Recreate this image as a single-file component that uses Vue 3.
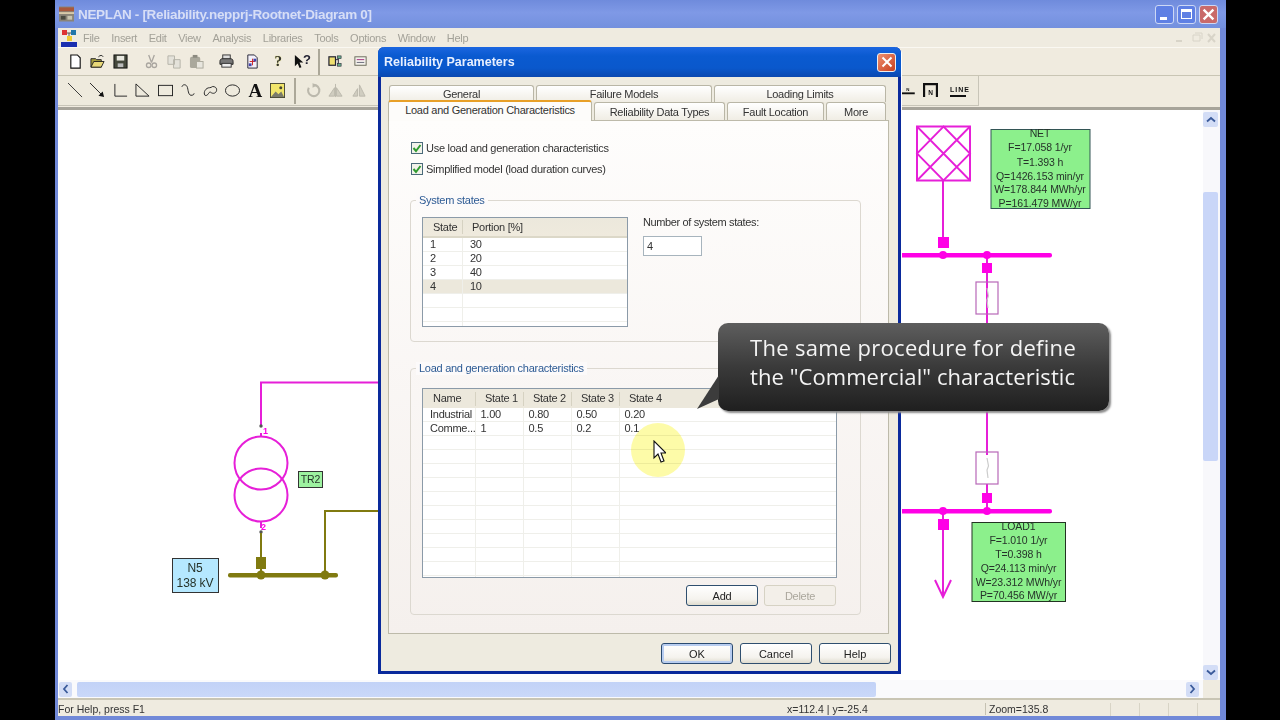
<script setup>
const menus = ['File', 'Insert', 'Edit', 'View', 'Analysis', 'Libraries', 'Tools', 'Options', 'Window', 'Help']
const stateRows = [['1', '30'], ['2', '20'], ['3', '40'], ['4', '10'], ['', ''], ['', ''], ['', '']]
const charRows = [
  ['Industrial', '1.00', '0.80', '0.50', '0.20'],
  ['Comme...', '1', '0.5', '0.2', '0.1'],
  ...Array.from({ length: 11 }, () => ['', '', '', '', ''])
]
const charHead = ['Name', 'State 1', 'State 2', 'State 3', 'State 4']
const netLines = [['NET', 137], ['F=17.058 1/yr', 151], ['T=1.393 h', 166], ['Q=1426.153 min/yr', 180], ['W=178.844 MWh/yr', 193], ['P=161.479 MW/yr', 207]]
const loadLines = [['LOAD1', 530], ['F=1.010 1/yr', 544], ['T=0.398 h', 558], ['Q=24.113 min/yr', 572], ['W=23.312 MWh/yr', 586], ['P=70.456 MW/yr', 599]]
</script>

<template>
  <div class="stage">
    <div class="win">
      <header class="title">
        <svg class="appicon" viewBox="0 0 16 16"><rect width="16" height="16" fill="#8a8478"/><rect y="1" width="16" height="4" fill="#a9583c"/><rect y="6" width="16" height="2" fill="#d8c9a8"/><rect x="2" y="10" width="5" height="4" fill="#4a4a40"/><rect x="9" y="10" width="5" height="4" fill="#c9c4b0"/></svg>
        <span class="title-text">NEPLAN - [Reliability.nepprj-Rootnet-Diagram 0]</span>
        <div class="caps">
          <span class="cap"><i class="min"></i></span>
          <span class="cap"><i class="max"></i></span>
          <span class="cap close"><svg viewBox="0 0 12 12"><path d="M1.500 1.500l9 9M10.500 1.500l-9 9" stroke="#fff" stroke-width="2.200" fill="none"/></svg></span>
        </div>
      </header>

      <nav class="menu">
        <svg class="logo" viewBox="0 0 16 18">
          <path d="M4 4h8M8 4v6" stroke="#555" fill="none"/>
          <rect x="1" y="1" width="5" height="5" fill="#d33"/><rect x="10" y="1" width="5" height="5" fill="#27a"/><rect x="6" y="7" width="5" height="5" fill="#ec3"/>
          <rect y="13" width="16" height="5" fill="#1a2fb0"/>
        </svg>
        <span v-for="m in menus" :key="m" class="menu-item">{{ m }}</span>
        <div class="mdi">
          <svg viewBox="0 0 44 12" width="44" height="12"><path d="M4 9h6" stroke="#d8d4c8" stroke-width="2"/><path d="M21 3h7v6h-7zM23 1h7v6" stroke="#d8d4c8" fill="none"/><path d="M36 2l7 8M43 2l-7 8" stroke="#d8d4c8" stroke-width="2"/></svg>
        </div>
      </nav>

      <div class="tb1">
        <span class="t"><svg viewBox="0 0 16 16"><path d="M3 1h7l3 3v11H3z" fill="#fff" stroke="#111" stroke-width="1.200"/></svg></span>
        <span class="t"><svg viewBox="0 0 16 16"><path d="M1 14V5h5l1 1h5v8z" fill="#a8a040" stroke="#222"/><path d="M1 14l3-6h11l-3 6z" fill="#e8d878" stroke="#222"/><path d="M9 3c2-2 4-2 5 0" stroke="#222" fill="none"/></svg></span>
        <span class="t"><svg viewBox="0 0 16 16"><rect x="1" y="1" width="14" height="14" fill="#45483c" stroke="#111"/><rect x="4" y="2" width="8" height="5" fill="#e8e8e0"/><rect x="5" y="10" width="6" height="4" fill="#bbb"/></svg></span>
        <span class="t m9"><svg viewBox="0 0 16 16"><path d="M5 1l3 8M11 1L8 9" stroke="#aaa6a0" stroke-width="1.400" fill="none"/><circle cx="5" cy="12" r="2.400" fill="none" stroke="#aaa6a0" stroke-width="1.400"/><circle cx="11" cy="12" r="2.400" fill="none" stroke="#aaa6a0" stroke-width="1.400"/></svg></span>
        <span class="t"><svg viewBox="0 0 16 16"><path d="M1 2h7v9H1zM7 6h7v9H7z" fill="#e4e2da" stroke="#b4b2a8"/></svg></span>
        <span class="t"><svg viewBox="0 0 16 16"><rect x="1" y="3" width="11" height="12" rx="2" fill="#aaa89c"/><rect x="4" y="1" width="5" height="3" fill="#8c8a80"/><rect x="8" y="8" width="7" height="7" fill="#e8e6de" stroke="#aaa89c"/></svg></span>
        <span class="t m8"><svg viewBox="0 0 16 16"><rect x="4" y="1" width="8" height="5" fill="#ddd" stroke="#333"/><path d="M1 8c0-2 1-3 3-3h8c2 0 3 1 3 3v3H1z" fill="#777" stroke="#222"/><rect x="3" y="10" width="10" height="4" fill="#eee" stroke="#333"/></svg></span>
        <span class="t m5"><svg viewBox="0 0 16 16"><path d="M3 1h7l3 3v11H3z" fill="#f2f0fa" stroke="#223"/><path d="M5 8h6M8 5v7" stroke="#c22"/><rect x="4" y="10" width="3" height="3" fill="#44a"/><rect x="9" y="5" width="3" height="3" fill="#44a"/></svg></span>
        <span class="t m4"><span class="qm">?</span></span>
        <span class="t"><svg viewBox="0 0 16 16"><path d="M2 1v12l3-3 2 5 2-1-2-5h4z" fill="#111"/></svg><span class="qm2">?</span></span>
        <span class="sep"></span>
        <span class="t"><svg viewBox="0 0 16 16"><rect x="1" y="3" width="7" height="9" fill="#f0e070" stroke="#223" stroke-width="1.300"/><path d="M8 6h3M11 3v9" stroke="#223"/><rect x="10" y="2" width="4" height="3" fill="#6a8" stroke="#223" stroke-width=".6"/><rect x="10" y="10" width="4" height="3" fill="#6a8" stroke="#223" stroke-width=".6"/></svg></span>
        <span class="t m3"><svg viewBox="0 0 16 16"><rect x="2" y="3" width="12" height="9" fill="#f4f2ec" stroke="#665"/><path d="M4 6h8" stroke="#a2287a"/><path d="M4 9h8" stroke="#667"/></svg></span>
      </div>

      <div class="tb2">
        <div class="bar">
          <div class="bar-group">
            <span class="t"><svg viewBox="0 0 16 16"><path d="M0 0l15 15" stroke="#333" fill="none"/></svg></span>
            <span class="t"><svg viewBox="0 0 16 16"><path d="M0 0l14 14" stroke="#222" fill="none"/><path d="M15 15l-6-1.500 4.500-4.500z" fill="#111"/></svg></span>
            <span class="t"><svg viewBox="0 0 16 16"><path d="M2 1v13h13" stroke="#222" fill="none"/></svg></span>
            <span class="t"><svg viewBox="0 0 16 16"><path d="M1 1v13h14z" stroke="#222" fill="none"/></svg></span>
            <span class="t"><svg viewBox="0 0 16 16"><rect x=".5" y="2.500" width="15" height="11" stroke="#222" fill="none"/></svg></span>
            <span class="t"><svg viewBox="0 0 16 16"><path d="M2 4c1-3 5-3 6 1s1 9 5 8c1.500-.3 2-1 2-2" stroke="#222" fill="none"/></svg></span>
            <span class="t"><svg viewBox="0 0 16 16"><path d="M2 13c-2-3 1-8 5-8 3 0 2-2 5-1 4 1 3 7-1 7-3 0-3-3-5 0-1 2-3 3-4 2z" stroke="#222" fill="none"/></svg></span>
            <span class="t"><svg viewBox="0 0 16 16"><ellipse cx="8" cy="8" rx="7.500" ry="6" stroke="#222" fill="none"/></svg></span>
            <span class="t big-a">A</span>
            <span class="t"><svg viewBox="0 0 16 16"><rect x=".5" y=".5" width="15" height="15" fill="#f1e56a" stroke="#443"/><path d="M1 15l5-6 3 3 3-3 3 6z" fill="#7a7a6a"/><circle cx="11.500" cy="5" r="1.600" fill="#443"/></svg></span>
            <span class="sep sep2"></span>
            <span class="t"><svg viewBox="0 0 16 16"><path d="M8 2a6 6 0 1 1-5 3" stroke="#bbb8ac" stroke-width="2.200" fill="none"/><path d="M7 0v5l4-2z" fill="#bbb8ac"/></svg></span>
            <span class="t"><svg viewBox="0 0 16 16"><path d="M8 1v14" stroke="#bbb8ac"/><path d="M7 5v9H1zM9 5l6 9H9z" fill="#d0cdc0" stroke="#bbb8ac"/></svg></span>
            <span class="t"><svg viewBox="0 0 16 16"><path d="M2 14l5-8v8zM9 2l6 12H9z" fill="#d0cdc0" stroke="#bbb8ac"/></svg></span>
          </div>
          <div class="bar-group">
            <span class="t"><svg viewBox="0 0 24 16"><rect x="0" y="11" width="22" height="3" fill="#111"/><text x="11" y="9" class="tiny">N</text></svg></span>
            <span class="t"><svg viewBox="0 0 16 16"><path d="M1 15V1h14v14" stroke="#111" stroke-width="2.600" fill="none"/><text x="8" y="13" class="tiny">N</text></svg></span>
            <span class="t line-ic">LINE</span>
          </div>
        </div>
      </div>

      <div class="work">
        <div class="canvas">
          <svg class="diagram" viewBox="58 110 1145 570">
            <g fill="none" stroke="#e61fd8" stroke-width="2">
              <path d="M378 382.500H261V425"/>
              <circle cx="261" cy="463" r="26.500"/>
              <circle cx="261" cy="495" r="26.500"/>
              <path d="M261 433v3M261 522v6"/>
              <rect x="917" y="126.500" width="53" height="54"/>
              <path d="M943.500 126.500l26.500 27-26.500 27-26.500-27zM917 126.500l53 54M970 126.500l-53 54" stroke-width="1.800"/>
              <path d="M943 181v62M987 255v200M987 484v27M943 511v85"/>
              <path d="M935 580l8 17 8-17"/>
            </g>
            <g fill="none" stroke="#b868b8" stroke-width="1.200">
              <rect x="976" y="282" width="22" height="32"/>
              <rect x="976" y="452" width="22" height="32"/>
              <path d="M987 288l1.500 8-1.500 4 1 8M987 458l1.500 8-1.500 4 1 8" stroke="#ccc"/>
            </g>
            <g fill="#ff00e6" stroke="none">
              <rect x="899" y="253" width="153" height="4.500" rx="2"/>
              <rect x="899" y="509" width="153" height="4.500" rx="2"/>
              <circle cx="943" cy="255" r="4"/><circle cx="987" cy="255" r="4"/>
              <circle cx="943" cy="511" r="4"/><circle cx="987" cy="511" r="4"/>
              <rect x="938" y="237" width="11" height="11"/><rect x="982" y="263" width="10" height="10"/>
              <rect x="982" y="493" width="10" height="10"/><rect x="938" y="519" width="11" height="11"/>
              <text x="263" y="434" class="num">1</text><text x="261" y="530" class="num">2</text>
            </g>
            <circle cx="261" cy="426" r="1.700" fill="#555"/><circle cx="261" cy="532" r="1.700" fill="#555"/>
            <g fill="none" stroke="#807a10" stroke-width="2">
              <path d="M261 533v42M325 575v-64H378"/>
            </g>
            <g fill="#807a10">
              <rect x="228" y="573" width="110" height="4.500" rx="2"/>
              <rect x="256" y="557" width="10" height="12"/>
              <circle cx="261" cy="575" r="4.500"/><circle cx="325" cy="575" r="4.500"/>
            </g>
            <rect x="298.500" y="471.500" width="24" height="16" fill="#9df2a0" stroke="#333"/>
            <text x="310.500" y="483" class="lbl">TR2</text>
            <rect x="172.500" y="558.500" width="46" height="34" fill="#b5e8ff" stroke="#333"/>
            <text x="195" y="572" class="lbl big">N5</text>
            <text x="195" y="587" class="lbl big">138 kV</text>
            <rect x="991" y="129.500" width="99" height="79" fill="#8cf08c" stroke="#355"/>
            <text v-for="l in netLines" :key="l[0]" x="1040" :y="l[1]" class="lbl">{{ l[0] }}</text>
            <rect x="972" y="522.500" width="93.500" height="79" fill="#8cf08c" stroke="#232"/>
            <text v-for="l in loadLines" :key="l[0]" x="1018.500" :y="l[1]" class="lbl">{{ l[0] }}</text>
          </svg>
        </div>
        <div class="vscroll">
          <span class="sbtn"><svg viewBox="0 0 10 6"><path d="M1 5l4-3.500L9 5" stroke="#3a5a9a" stroke-width="1.800" fill="none"/></svg></span>
          <span class="vtrack"><span class="vthumb"></span></span>
          <span class="sbtn"><svg viewBox="0 0 10 6"><path d="M1 1l4 3.500L9 1" stroke="#3a5a9a" stroke-width="1.800" fill="none"/></svg></span>
        </div>
      </div>

      <div class="hscroll">
        <span class="sbtn h"><svg viewBox="0 0 6 10"><path d="M5 1L1.500 5 5 9" stroke="#3a5a9a" stroke-width="1.800" fill="none"/></svg></span>
        <span class="htrack"><span class="hthumb"></span></span>
        <span class="sbtn h"><svg viewBox="0 0 6 10"><path d="M1 1l3.500 4L1 9" stroke="#3a5a9a" stroke-width="1.800" fill="none"/></svg></span>
        <span class="corner"></span>
      </div>

      <footer class="status">
        <span class="st-main">For Help, press F1</span>
        <span class="st-pos">x=112.4 | y=-25.4</span>
        <span class="st-zoom">Zoom=135.8</span>
        <span class="st-e"></span><span class="st-e"></span><span class="st-e"></span><span class="st-e last"></span>
      </footer>
    </div>

    <section class="dlg">
      <header class="dlg-title">
        <span>Reliability Parameters</span>
        <span class="dlg-close"><svg viewBox="0 0 12 12"><path d="M1.500 1.500l9 9M10.500 1.500l-9 9" stroke="#fff" stroke-width="2" fill="none"/></svg></span>
      </header>
      <div class="dlg-body">
        <div class="tabrow one">
          <span class="tab w145">General</span>
          <span class="tab w176">Failure Models</span>
          <span class="tab w172">Loading Limits</span>
        </div>
        <div class="tabrow two">
          <span class="tab active">Load and Generation Characteristics</span>
          <span class="tab w130">Reliability Data Types</span>
          <span class="tab w97">Fault Location</span>
          <span class="tab w60">More</span>
        </div>
        <div class="panel">
          <label class="chk"><span class="box"><svg viewBox="0 0 10 10"><path d="M1.500 5l2.500 3 4.500-6" stroke="#2f9a2f" stroke-width="2" fill="none"/></svg></span>Use load and generation characteristics</label>
          <label class="chk"><span class="box"><svg viewBox="0 0 10 10"><path d="M1.500 5l2.500 3 4.500-6" stroke="#2f9a2f" stroke-width="2" fill="none"/></svg></span>Simplified model (load duration curves)</label>

          <div class="group g1">
            <span class="legend">System states</span>
            <div class="g1-inner">
              <div class="list">
                <div class="lhead"><span class="c1 hc">State</span><span class="c2 hc">Portion [%]</span></div>
                <div v-for="(r, i) in stateRows" :key="i" class="lrow" :class="{ sel: i === 3 }"><span class="c1">{{ r[0] }}</span><span class="c2">{{ r[1] }}</span></div>
              </div>
              <div class="num-col">
                <span>Number of system states:</span>
                <span class="input">4</span>
              </div>
            </div>
          </div>

          <div class="group g2">
            <span class="legend">Load and generation characteristics</span>
            <div class="grid">
              <div class="ghead"><span v-for="h in charHead" :key="h" class="gc hc">{{ h }}</span></div>
              <div v-for="(r, i) in charRows" :key="i" class="grow"><span v-for="(c, j) in r" :key="j" class="gc">{{ c }}</span></div>
            </div>
            <div class="gbtns">
              <span class="btn">Add</span>
              <span class="btn off">Delete</span>
            </div>
          </div>
        </div>
        <div class="dlg-foot">
          <span class="btn def">OK</span>
          <span class="btn">Cancel</span>
          <span class="btn">Help</span>
        </div>
      </div>
    </section>

    <div class="halo"></div>
    <svg class="cursor" viewBox="0 0 13 23"><path d="M1 1v17l4-4 3 8 3-1-3-8h5z" fill="#fff" stroke="#111" stroke-width="1.100"/></svg>

    <aside class="callout">
      <svg class="tail" viewBox="0 0 24 36"><path d="M23 1L1 35l22-10z" fill="#3c3c3c"/></svg>
      <p>The same procedure for define</p>
      <p class="narrow">the "Commercial" characteristic</p>
    </aside>
  </div>
</template>

<style>
html, body { margin: 0; background: #000; }
</style>

<style scoped>
.stage { position: relative; width: 1280px; height: 720px; background: #000; overflow: hidden; font-family: "Liberation Sans", Arial, sans-serif; filter: blur(0.35px); }
.win { position: absolute; left: 55px; top: 0; width: 1171px; height: 720px; display: flex; flex-direction: column; background: #7189d8; box-sizing: border-box; padding: 0 6px 4px 3px; }
.title { height: 28px; flex: none; display: flex; align-items: center; gap: 4px; background: linear-gradient(#6f8bdc, #7f99e6 45%, #7390de); margin: 0 -6px 0 -3px; padding: 0 8px 0 4px; }
.appicon { width: 15px; height: 16px; }
.title-text { color: #d7def6; font-size: 13.500px; font-weight: bold; letter-spacing: -.34px; }
.caps { margin-left: auto; display: flex; gap: 3px; }
.cap { width: 19px; height: 19px; border-radius: 3px; background: #5f80e4; border: 1px solid #cdd8f5; box-sizing: border-box; display: flex; align-items: center; justify-content: center; position: relative; }
.cap .min { width: 7px; height: 3px; background: #fff; margin-top: 9px; margin-right: 2px; }
.cap .max { width: 11px; height: 10px; border: 1.500px solid #fff; border-top-width: 3px; box-sizing: border-box; }
.cap.close { background: #c96a6a; }
.cap.close svg { width: 13px; height: 13px; }
.menu { height: 19px; flex: none; display: flex; align-items: center; gap: 11.600px; background: #efebe0; font-size: 11px; letter-spacing: -.27px; color: #a3a198; padding-left: 3px; }
.logo { width: 16px; height: 18px; margin-right: -5.600px; }
.mdi { margin-left: auto; margin-right: 4px; display: flex; }
.tb1 { height: 29px; flex: none; display: flex; align-items: center; background: #f0ebdf; border-top: 1px solid #faf8f2; border-bottom: 1px solid #c9c5b4; box-sizing: border-box; padding-left: 6px; }
.t { width: 22.500px; flex: none; height: 18px; display: flex; align-items: center; justify-content: center; position: relative; }
.t svg { width: 15px; height: 15px; }
.m9 { margin-left: 9px; }
.m8 { margin-left: 7px; }
.m5 { margin-left: 4px; }
.m4 { margin-left: 3px; }
.m3 { margin-left: 3px; }
.qm { font: bold 15px "Liberation Serif", serif; color: #333; text-shadow: 0 0 1px #dd4; }
.qm2 { position: absolute; right: 1px; top: -1px; font: bold 13px "Liberation Sans", sans-serif; color: #223; }
.sep { width: 2px; height: 26px; background: #aca899; margin: 0 4px 0 6px; }
.sep2 { margin-left: 5px; margin-right: 6px; }
.tb2 { height: 31px; flex: none; display: flex; background: #f0ebdf; border-bottom: 3px solid #a7a49a; box-sizing: content-box; }
.bar { width: 921px; height: 30px; display: flex; justify-content: space-between; align-items: center; padding: 0 4px 0 6px; box-sizing: border-box; background: #eeeadd; border-right: 1px solid #c8c5b8; border-bottom: 1px solid #c8c5b8; }
.bar-group { display: flex; align-items: center; }
.big-a { font: bold 19px "Liberation Serif", serif; color: #111; }
.tiny { font: bold 7px "Liberation Sans", sans-serif; text-anchor: middle; fill: #111; }
.line-ic { font: bold 7px "Liberation Sans", sans-serif; color: #111; letter-spacing: 1px; border-bottom: 2px solid #111; height: 10px; display: block; text-align: center; width: 16px; line-height: 9px; margin: 0 8px; }
.work { flex: 1; min-height: 0; display: flex; background: #fff; }
.canvas { flex: 1; min-width: 0; position: relative; overflow: hidden; background: #fff; }
.diagram { position: absolute; inset: 0; width: 100%; height: 100%; }
.lbl { font: 10.500px "Liberation Sans", sans-serif; fill: #26332a; text-anchor: middle; letter-spacing: -.1px; }
.lbl.big { font-size: 12px; }
.num { font: bold 9px "Liberation Sans", sans-serif; }
.vscroll { width: 17px; flex: none; display: flex; flex-direction: column; background: #f8f8fb; }
.sbtn { width: 15px; height: 15px; flex: none; background: #d3ddf6; border-radius: 2px; display: flex; align-items: center; justify-content: center; }
.sbtn svg { width: 10px; height: 7px; }
.vscroll .sbtn { margin-top: 2px; }
.vscroll .sbtn:last-child { margin: 0; }
.vtrack { flex: 1; display: flex; flex-direction: column; padding-top: 65px; padding-bottom: 204px; }
.vthumb { flex: 1; background: #c9d6f8; width: 15px; border-radius: 2px; }
.hscroll { height: 20px; flex: none; display: flex; align-items: center; background: #fafafc; padding-left: 1px; border-bottom: 2px solid #c9c5b4; box-sizing: border-box; }
.sbtn.h { width: 13px; height: 15px; }
.sbtn.h svg { width: 7px; height: 10px; }
.htrack { flex: 1; display: flex; padding-left: 5px; }
.hthumb { width: 799px; height: 15px; background: linear-gradient(#c2d2f7, #cad8f9); border-radius: 2px; }
.corner { width: 17px; height: 18px; background: #efebe0; margin-left: 4px; }
.status { height: 16px; flex: none; display: flex; align-items: center; background: #efebe0; font-size: 10.500px; color: #333; padding-top: 2px; box-sizing: border-box; }
.st-main { width: 729px; }
.st-pos { width: 198px; }
.st-zoom { width: 125px; border-left: 1px solid #c5c1b2; padding-left: 3px; box-sizing: border-box; }
.st-e { width: 28px; height: 13px; border-left: 1px solid #d8d4c6; }
.st-e.last { width: 18px; }

.dlg { position: absolute; left: 378px; top: 47px; width: 523px; height: 627px; background: #ece9d8; border: 3px solid #0a2a9c; border-top: 0; border-radius: 6px 6px 0 0; box-sizing: border-box; display: flex; flex-direction: column; box-shadow: 1px 1px 0 #fff; }
.dlg-title { height: 30px; margin: 0 -3px; flex: none; display: flex; align-items: center; justify-content: space-between; padding: 0 5px 0 6px; background: linear-gradient(#1b66e0, #0a5ad0 30%, #0a58cc 70%, #0a48b0); border-radius: 6px 6px 0 0; color: #e8f0ff; font-size: 12.500px; font-weight: bold; box-sizing: border-box; }
.dlg-close { width: 19px; height: 19px; border-radius: 3px; background: linear-gradient(135deg, #ee9070, #c8401f); border: 1px solid #eee; box-sizing: border-box; display: flex; align-items: center; justify-content: center; }
.dlg-close svg { width: 12px; height: 12px; }
.dlg-body { flex: 1; display: flex; flex-direction: column; padding: 8px 9px 0 7px; background: #eeebe0; min-height: 0; }
.tabrow { display: flex; height: 17px; font-size: 11px; letter-spacing: -.27px; color: #333; }
.tabrow.one { padding-left: 1px; gap: 2px; }
.tabrow.two { height: 18px; align-items: flex-end; gap: 2px; padding-right: 2px; }
.tab { box-sizing: border-box; height: 100%; display: flex; align-items: center; justify-content: center; background: linear-gradient(#fff, #f0ede4); border: 1px solid #b9b6a6; border-bottom: 0; border-radius: 3px 3px 0 0; }
.w145 { width: 145px; }
.w176 { width: 176px; }
.w172 { width: 172px; }
.w130 { width: 131px; }
.w97 { width: 97px; }
.w60 { width: 60px; }
.tab.active { width: 204px; height: 21px; margin-bottom: -1px; margin-top: -3px; background: #fdfcfa; border-top: 2px solid #e8a028; padding-bottom: 4px; position: relative; z-index: 1; }
.panel { flex: none; height: 514px; width: 501px; box-sizing: border-box; background: linear-gradient(#fefdfc, #f5f0ed); border: 1px solid #bdbaaa; padding: 20px 0 0 22px; display: flex; flex-direction: column; font-size: 11px; letter-spacing: -.27px; color: #333; }
.chk { display: flex; align-items: center; gap: 3px; height: 13px; margin-bottom: 8px; }
.box { width: 12px; height: 12px; box-sizing: border-box; border: 1px solid #4a6a7a; background: #f2f2ea; display: flex; }
.box svg { width: 10px; height: 10px; }
.group { position: relative; width: 451px; margin-left: -1px; box-sizing: border-box; border: 1px solid #dcd8d0; border-radius: 4px; padding-left: 11px; }
.g1 { height: 142px; margin-top: 17px; padding-top: 16px; }
.g2 { height: 247px; margin-top: 26px; padding-top: 19px; }
.legend { position: absolute; left: 5px; top: -7px; padding: 0 3px; background: #fcfafa; color: #2d5b94; line-height: 13px; }
.g1-inner { display: flex; gap: 15px; }
.list { width: 206px; height: 110px; box-sizing: border-box; border: 1px solid #8b9aa8; overflow: hidden; background: #fff; }
.lhead { height: 20px; display: flex; align-items: center; background: linear-gradient(#ece8dc, #efeadd); border-bottom: 2px solid #dcd8c8; box-sizing: border-box; }
.lrow { height: 14px; display: flex; align-items: center; border-bottom: 1px solid #efefea; box-sizing: border-box; line-height: 13px; }
.lrow.sel { background: #ece8dc; }
.c1 { width: 40px; padding-left: 7px; box-sizing: border-box; border-right: 1px solid #efefea; height: 100%; flex: none; }
.c2 { padding-left: 7px; }
.hc { text-align: left; }
.lhead .c1 { padding-left: 10px; display: flex; align-items: center; border-right: 1px solid #d6d2c2; height: 14px; }
.lhead .c2 { padding-left: 9px; }
.num-col { display: flex; flex-direction: column; margin-top: -1px; gap: 7px; line-height: 13px; letter-spacing: -.37px; }
.input { width: 59px; height: 20px; box-sizing: border-box; border: 1px solid #a7b4bd; background: #fff; padding: 3px 0 0 3px; }
.grid { width: 415px; height: 190px; box-sizing: border-box; border: 1px solid #8b9aa8; overflow: hidden; background: #fff; }
.ghead { height: 19px; display: flex; align-items: center; background: #ece8dc; box-sizing: border-box; }
.grow { height: 14px; display: flex; align-items: center; border-bottom: 1px solid #efefea; box-sizing: border-box; line-height: 13px; }
.gc { width: 48px; flex: none; box-sizing: border-box; padding-left: 4.500px; height: 100%; border-right: 1px solid #efefea; overflow: hidden; white-space: nowrap; }
.gc:first-child { width: 53px; padding-left: 7px; }
.gc:last-child { border-right: 0; }
.ghead .gc { border-right: 1px solid #d6d2c2; height: 14px; padding-left: 9px; }
.ghead .gc:first-child { padding-left: 10px; }
.ghead .gc:last-child { border-right: 0; }
.gbtns { display: flex; justify-content: flex-end; gap: 6px; width: 414px; margin-top: 7px; }
.btn { width: 72px; height: 21px; box-sizing: border-box; border: 1px solid #2f4f6f; border-radius: 3px; background: linear-gradient(#fff, #f5f3ee 70%, #dfdccf); display: flex; align-items: center; justify-content: center; font-size: 11px; color: #222; }
.btn.off { color: #aaa69c; border-color: #d6d2c4; background: #f3efe9; }
.btn.def { border-color: #2a4a70; box-shadow: inset 0 0 0 2px #b8cdf0; }
.dlg-foot { display: flex; justify-content: flex-end; gap: 7px; margin: 9px -2px 0 0; }

.halo { position: absolute; left: 631px; top: 423px; width: 54px; height: 54px; border-radius: 50%; background: radial-gradient(#fdfba8 70%, #fefcc0 92%, #fffde0); mix-blend-mode: multiply; }
.cursor { position: absolute; left: 653px; top: 440px; width: 13px; height: 23px; }
.callout { position: absolute; left: 718px; top: 323px; width: 391px; height: 88px; box-sizing: border-box; border-radius: 10px; background: linear-gradient(#5e5e5e, #3a3a3a 50%, #1f1f1f); box-shadow: 2px 2px 2px #8c8c8c; color: #f4f4f4; font-family: "Open Sans", sans-serif; font-size: 22px; padding: 10px 0 0 32px; line-height: 29px; letter-spacing: .3px; }
.callout p { margin: 0; }
.callout .narrow { letter-spacing: .07px; }
.tail { position: absolute; left: -22px; top: 51px; width: 24px; height: 36px; }
</style>
